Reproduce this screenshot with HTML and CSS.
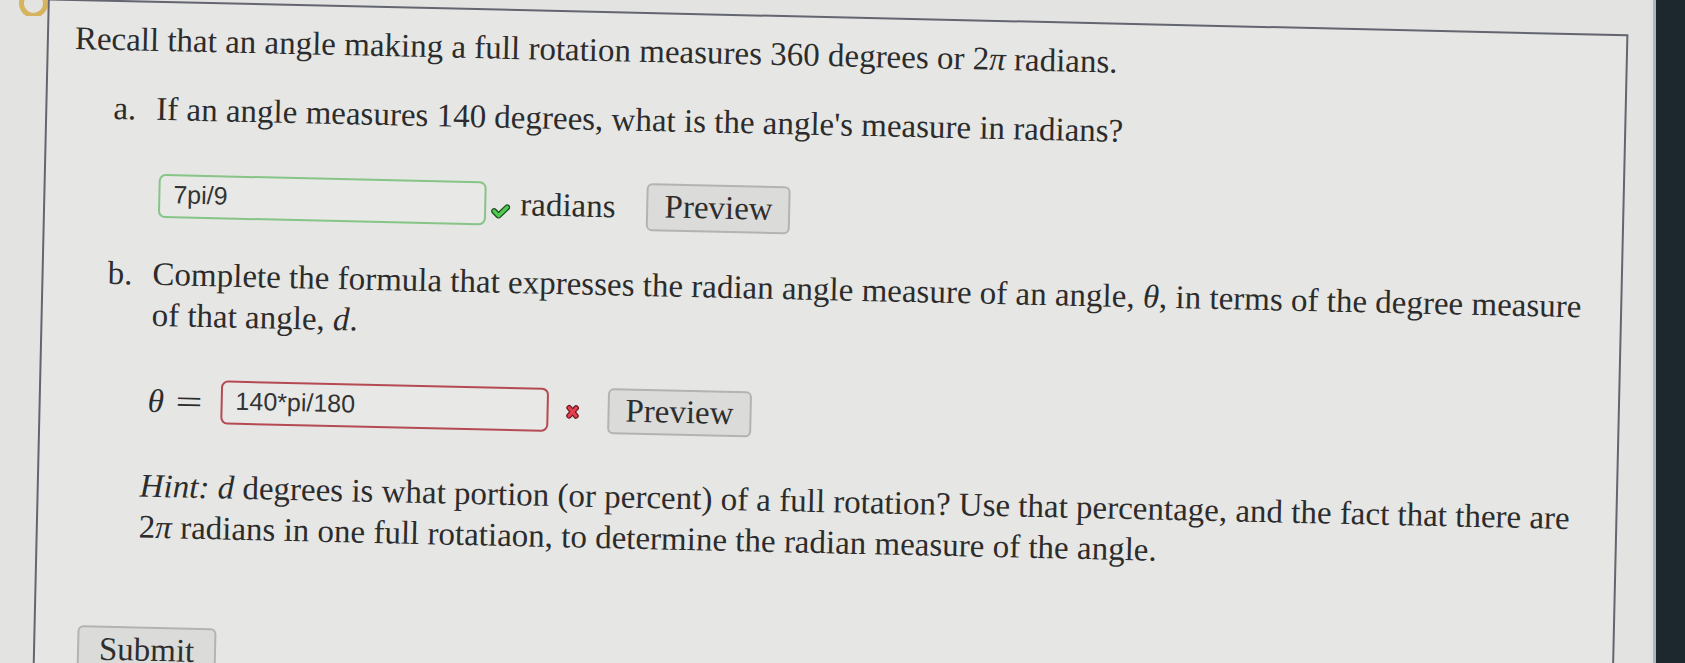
FILE: index.html
```html
<!DOCTYPE html>
<html lang="en">
<head>
<meta charset="utf-8">
<title>Angle measures</title>
<link rel="stylesheet" href="styles.css">
</head>
<body>
<div class="screen">
  <div class="page">
    <svg class="corner-logo" width="50" height="16" viewBox="0 0 50 16" aria-hidden="true">
      <path d="M45 0 A12 12 0 1 1 26 -6" fill="none" stroke="#d6b35e" stroke-width="5" stroke-linecap="round"/>
    </svg>
    <div class="card">
      <p class="intro">Recall that an angle making a full rotation measures 360 degrees or <span class="math">2<i>π</i></span> radians.</p>
      <ol class="parts">
        <li class="part">
          <span class="marker">a.</span>
          <div class="part-body">
            <p class="question">If an angle measures 140 degrees, what is the angle's measure in radians?</p>
            <div class="answer-row">
              <input class="answer answer-correct" type="text" value="7pi/9" readonly>
              <svg class="icon icon-check" width="19" height="15" viewBox="0 0 19 15" aria-hidden="true">
                <path d="M3 7.5 L7.5 12 L16 3.5" fill="none" stroke="#1d4f20" stroke-width="6" stroke-linecap="round" stroke-linejoin="round"/>
                <path d="M3 7.5 L7.5 12 L16 3.5" fill="none" stroke="#4fcb52" stroke-width="3.4" stroke-linecap="round" stroke-linejoin="round"/>
              </svg>
              <span class="unit">radians</span>
              <button class="btn btn-preview" type="button">Preview</button>
            </div>
          </div>
        </li>
        <li class="part">
          <span class="marker">b.</span>
          <div class="part-body">
            <p class="question">Complete the formula that expresses the radian angle measure of an angle, <i>θ</i>, in terms of the degree measure of that angle, <i>d</i>.</p>
            <div class="answer-row answer-row-b">
              <span class="formula"><i class="theta">θ</i><span class="equals">=</span></span>
              <input class="answer answer-wrong" type="text" value="140*pi/180" readonly>
              <svg class="icon icon-cross" width="14" height="15" viewBox="0 0 14 15" aria-hidden="true">
                <path d="M3.5 3.5 L10.5 11.5 M10.5 3.5 L3.5 11.5" fill="none" stroke="#6a1a20" stroke-width="5.6" stroke-linecap="round"/>
                <path d="M3.5 3.5 L10.5 11.5 M10.5 3.5 L3.5 11.5" fill="none" stroke="#e5404d" stroke-width="3.2" stroke-linecap="round"/>
              </svg>
              <button class="btn btn-preview btn-preview-b" type="button">Preview</button>
            </div>
            <p class="hint"><i>Hint:</i> <i>d</i> degrees is what portion (or percent) of a full rotation? Use that percentage, and the fact that there are <span class="math">2<i>π</i></span> radians in one full rotatiaon, to determine the radian measure of the angle.</p>
          </div>
        </li>
      </ol>
      <button class="btn btn-submit" type="button">Submit</button>
    </div>
  </div>
  <div class="bezel"></div>
</div>
</body>
</html>
```

FILE: styles.css
```css
html, body {
  margin: 0;
  padding: 0;
  height: 663px;
  overflow: hidden;
}

body {
  background: #e1e1df;
  font-family: "Liberation Serif", "Times New Roman", serif;
  color: #2c2c2c;
}

.screen {
  display: flex;
  height: 663px;
}

.page {
  flex: 1;
  position: relative;
  overflow: hidden;
  background: #e3e3e1;
}

.corner-logo {
  position: absolute;
  left: 0;
  top: 0;
}

.card {
  box-sizing: border-box;
  width: 1581px;
  height: 760px;
  margin: 1px 0 0 41px;
  padding: 17px 20px 0 26px;
  border: 2px solid #63656f;
  background: #e6e6e4;
  font-size: 33px;
  line-height: 41px;
  transform: rotate(1.3deg);
  transform-origin: 119px 299px;
}

.intro {
  margin: 0;
}

.math i,
.question i,
.hint i {
  font-style: italic;
}

.parts {
  list-style: none;
  margin: 28px 0 0 0;
  padding: 0;
}

.part {
  display: grid;
  grid-template-columns: 83px 1fr;
}

.part + .part {
  margin-top: 34px;
}

.marker {
  text-align: right;
  padding-right: 20px;
}

.question {
  margin: 0;
}

.answer-row {
  display: flex;
  align-items: center;
  height: 48px;
  margin-top: 42px;
}

.answer-row-b {
  height: 46px;
}

.answer {
  box-sizing: border-box;
  width: 328px;
  height: 44px;
  margin: 0 0 0 4px;
  padding: 0 0 4px 13px;
  border: 2px solid #888;
  border-radius: 7px;
  background: #e8e8e6;
  font-family: "Liberation Sans", Arial, sans-serif;
  font-size: 25px;
  color: #333;
  outline: none;
}

.answer-correct {
  border-color: #86c487;
}

.answer-wrong {
  border-color: #b54a53;
  margin-left: 22px;
}

.icon {
  flex: none;
  display: block;
}

.icon-check {
  margin: 14px 0 0 5px;
}

.icon-cross {
  margin: 2px 0 0 17px;
}

.unit {
  margin-left: 10px;
}

.btn {
  box-sizing: border-box;
  height: 48px;
  padding: 0 16px 2px;
  border: 2px solid #b3b3b3;
  border-radius: 6px;
  background: #dbdbd9;
  font-family: "Liberation Serif", "Times New Roman", serif;
  font-size: 33px;
  color: #2e2e2e;
}

.btn-preview {
  width: 144px;
  margin-left: 31px;
}

.btn-preview-b {
  height: 46px;
  margin-left: 28px;
}

.formula {
  display: flex;
  align-items: center;
  margin-left: -2px;
}

.theta {
  font-style: italic;
}

.equals {
  display: inline-block;
  margin-left: 16px;
  transform: scaleX(1.45);
}

.hint {
  margin: 42px 0 0 -8px;
}

.btn-submit {
  display: block;
  width: 139px;
  margin: 79px 0 0 16px;
}

.bezel {
  width: 29px;
  flex: none;
  margin-left: 3px;
  border-left: 3px solid #a9b7c4;
  background: #1c272e;
}
```
